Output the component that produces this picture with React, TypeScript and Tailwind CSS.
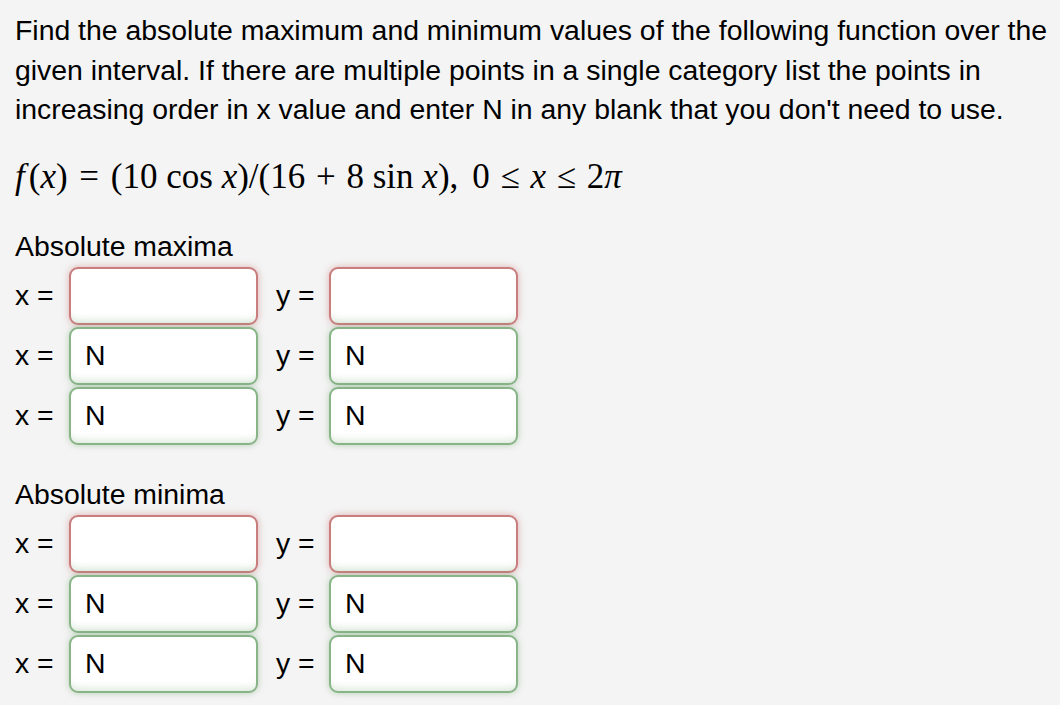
import React from "react";

type BoxProps = { value?: string; ok: boolean };

function Box({ value, ok }: BoxProps) {
  return (
    <div
      className={
        "w-[189px] h-[58px] rounded-[9px] border-2 bg-white flex items-center pl-[14px] text-[28.4px] " +
        (ok
          ? "border-[#88b488] shadow-[0_0_6px_rgba(120,170,120,0.5),inset_0_-8px_8px_-6px_rgba(140,180,140,0.35)]"
          : "border-[#c97d7d] shadow-[0_0_7px_rgba(200,110,110,0.5),inset_0_-8px_8px_-6px_rgba(140,180,140,0.35)]")
      }
    >
      {value}
    </div>
  );
}

function Row({ value }: { value?: string }) {
  const ok = value !== undefined;
  return (
    <div className="flex items-center h-[58px]">
      <span className="w-[54px]">x =</span>
      <Box value={value} ok={ok} />
      <span className="ml-[18px] w-[53px]">y =</span>
      <Box value={value} ok={ok} />
    </div>
  );
}

export default function App() {
  return (
    <div
      className="w-[1060px] h-[705px] bg-[#f4f4f4] text-black pl-[15px] pt-[11px] overflow-hidden"
      style={{ fontFamily: '"Liberation Sans", Arial, sans-serif' }}
    >
      <p className="text-[28.4px] leading-[39.5px] w-[1040px]">
        Find the absolute maximum and minimum values of the following function over the given
        interval. If there are multiple points in a single category list the points in increasing
        order in x value and enter N in any blank that you don't need to use.
      </p>
      <div
        className="mt-[27px] text-[35px] leading-[40px] whitespace-nowrap"
        style={{ fontFamily: '"Liberation Serif", "Times New Roman", serif' }}
      >
        <i>f</i>
        <span className="ml-[4px]">(</span>
        <i>x</i>) <span className="mx-[3px]">=</span> (10 cos <i>x</i>)/(16 <span className="mx-[2px]">+</span> 8 sin <i>x</i>),<span className="ml-[14px]">0</span> <span className="mx-[2px]">≤</span> <i>x</i> <span className="mx-[2px]">≤</span> 2<i>π</i>
      </div>
      <div className="mt-[33px] text-[28.4px] leading-[32px]">Absolute maxima</div>
      <div className="mt-[5px] flex flex-col gap-[2px] text-[28.4px]">
        <Row />
        <Row value="N" />
        <Row value="N" />
      </div>
      <div className="mt-[33px] text-[28.4px] leading-[32px]">Absolute minima</div>
      <div className="mt-[5px] flex flex-col gap-[2px] text-[28.4px]">
        <Row />
        <Row value="N" />
        <Row value="N" />
      </div>
    </div>
  );
}
